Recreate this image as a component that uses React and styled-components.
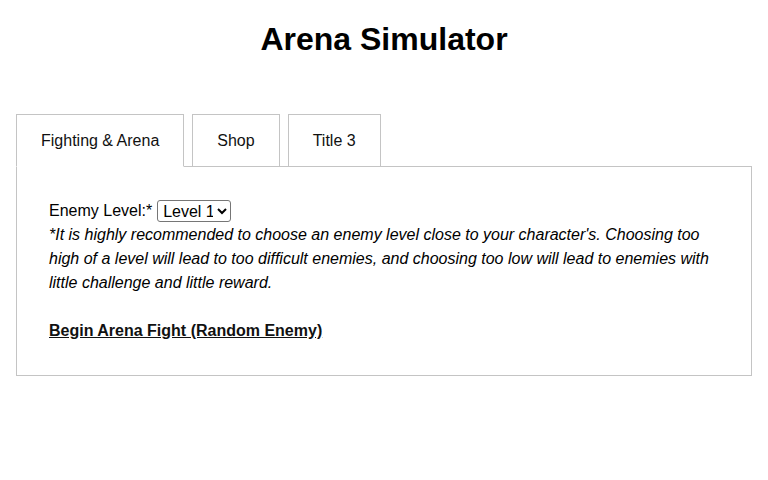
import styled, { createGlobalStyle } from "styled-components";

const GlobalStyle = createGlobalStyle`
  body {
    margin: 0;
    background: #fff;
    font-family: "Liberation Sans", Arial, sans-serif;
    color: #000;
  }
`;

const Container = styled.div`
  padding: 0 16px;
`;

const Title = styled.h1`
  font-size: 32px;
  font-weight: 700;
  line-height: 37px;
  text-align: center;
  margin: 21px 0 56px 0;
`;

const TabBar = styled.div`
  display: flex;
  gap: 8px;
  align-items: flex-end;
`;

const Tab = styled.button`
  font-family: inherit;
  font-size: 16px;
  line-height: 18px;
  color: #111;
  background: #fff;
  border: 1px solid #c4c4c4;
  border-bottom: ${({ $active }) => ($active ? "1px solid #fff" : "none")};
  padding: 17px 24px 16px 24px;
  margin-bottom: ${({ $active }) => ($active ? "-1px" : "0")};
  position: relative;
  z-index: 1;
  cursor: pointer;
`;

const Panel = styled.div`
  border: 1px solid #c4c4c4;
  padding: 32px;
  font-size: 16px;
  line-height: 24px;
`;

const Row = styled.div`
  display: flex;
  align-items: center;
  gap: 5px;
`;

const Select = styled.select`
  font-family: inherit;
  font-size: 16px;
  color: #000;
  background: #fff;
  border: 1px solid #767676;
  border-radius: 3px;
  height: 22px;
  width: 74px;
  padding: 0 1px;
`;

const Note = styled.p`
  font-style: italic;
  margin: 0 0 24px 0;
`;

const ActionLink = styled.a`
  font-weight: 700;
  color: #111;
  text-decoration: underline;
  cursor: pointer;
`;

const App = () => {
  return (
    <Container>
      <GlobalStyle />
      <Title>Arena Simulator</Title>
      <TabBar>
        <Tab $active>Fighting &amp; Arena</Tab>
        <Tab>Shop</Tab>
        <Tab>Title 3</Tab>
      </TabBar>
      <Panel>
        <Row>
          Enemy Level:*
          <Select defaultValue="1">
            <option value="1">Level 1</option>
            <option value="2">Level 2</option>
            <option value="3">Level 3</option>
          </Select>
        </Row>
        <Note>
          *It is highly recommended to choose an enemy level close to your character's. Choosing too
          high of a level will lead to too difficult enemies, and choosing too low will lead to enemies with
          little challenge and little reward.
        </Note>
        <ActionLink>Begin Arena Fight (Random Enemy)</ActionLink>
      </Panel>
    </Container>
  );
};

export default App;
